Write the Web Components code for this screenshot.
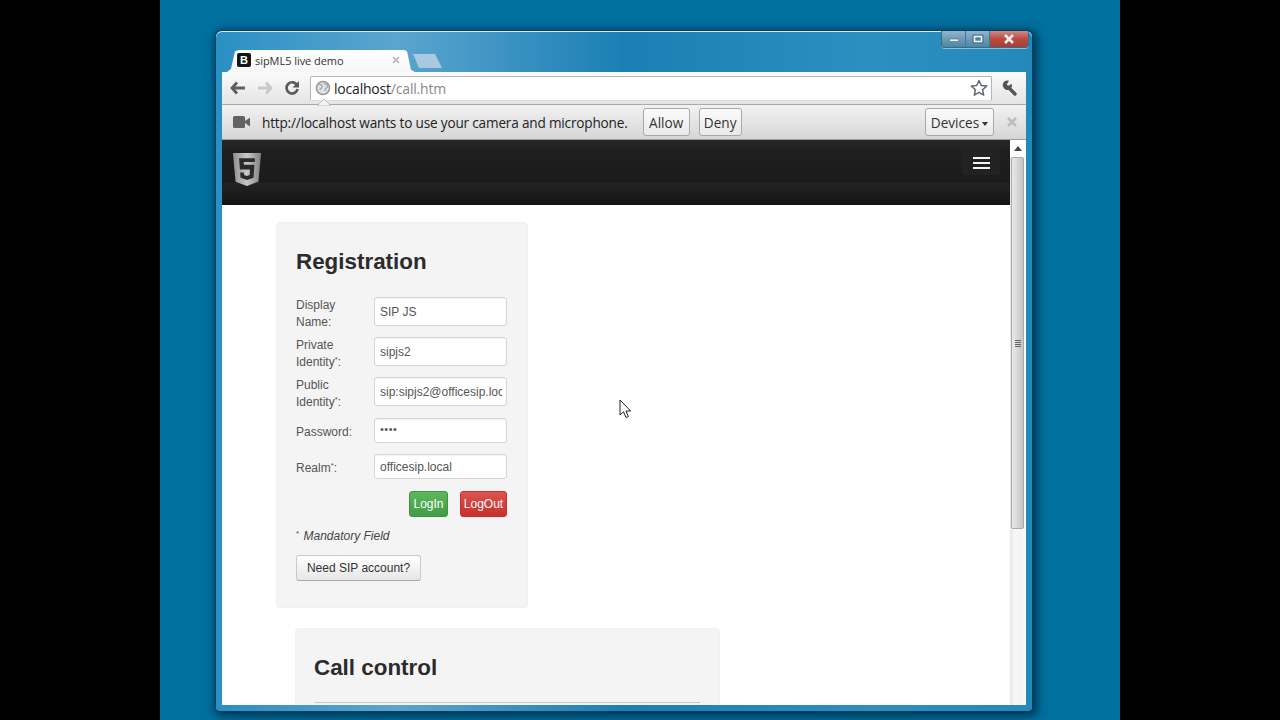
<!DOCTYPE html>
<html>
<head>
<meta charset="utf-8">
<title>sipML5 live demo</title>
<style>
    html, body { margin: 0; height: 100%; background: #000; overflow: hidden; }
</style>
</head>
<body>
<desktop-screen>
    <browser-window>
        <tab-strip slot="tabs"></tab-strip>
        <browser-toolbar slot="toolbar"></browser-toolbar>
        <permission-bar slot="infobar"></permission-bar>
        <demo-page></demo-page>
    </browser-window>
    <mouse-cursor></mouse-cursor>
</desktop-screen>

<script>
function define(name, html) {
    customElements.define(name, class extends HTMLElement {
        constructor() {
            super();
            this.attachShadow({mode: 'open'}).innerHTML = html;
        }
    });
}

define('desktop-screen', `
    <style>
        :host {
            display: block;
            position: relative;
            box-sizing: border-box;
            width: 960px;
            height: 720px;
            margin: 0 auto;
            padding: 31px 0 0 56px;
            overflow: hidden;
            background: #00709f;
        }
    </style>
    <slot></slot>
`);

define('browser-window', `
    <style>
        :host {
            display: flex;
            flex-direction: column;
            position: relative;
            box-sizing: border-box;
            width: 816px;
            height: 680px;
            padding: 0 6px 6px 6px;
            border-radius: 6px 6px 4px 4px;
            background: linear-gradient(90deg, #2a8fc4 0, #5ba5cf 22%, #1b7fb5 50%, #2d8fc0 80%, #2389bb 100%);
            box-shadow: 0 0 0 1px #0b3f5e, 2px 2px 10px 3px rgba(0,25,45,.7), inset 0 1px 0 #d6ecf6;
        }
        .tabs { height: 41px; flex: none; }
        .inner { flex: 1; display: flex; flex-direction: column; min-height: 0; background: #fff; }
        .controls {
            position: absolute;
            top: 0;
            right: 3px;
            display: flex;
            height: 16px;
            border: 1px solid #3b6a88;
            border-top: 0;
            border-radius: 0 0 4px 4px;
            overflow: hidden;
            box-shadow: 0 1px 0 rgba(255,255,255,.45);
        }
        .controls div { display: flex; align-items: center; justify-content: center; }
        .min, .max {
            width: 23px;
            background: linear-gradient(#8fb6cd, #6f9bb6 50%, #4b86a8);
            border-right: 1px solid #4a7590;
        }
        .close { width: 38px; background: linear-gradient(#cf8b82, #b94b41 50%, #a83e35); }
    </style>
    <div class="tabs"><slot name="tabs"></slot></div>
    <div class="inner">
        <slot name="toolbar"></slot>
        <slot name="infobar"></slot>
        <slot></slot>
    </div>
    <div class="controls">
        <div class="min"><svg width="12" height="6"><rect x="1.5" y="3" width="9" height="2.5" fill="#e8f0f5" stroke="#456" stroke-width=".5"/></svg></div>
        <div class="max"><svg width="12" height="10"><rect x="1" y="1" width="10" height="8" fill="#56809a" stroke="#34566c" stroke-width=".6"/><rect x="2.5" y="2.5" width="7" height="5" fill="none" stroke="#eef4f8" stroke-width="1.6"/></svg></div>
        <div class="close"><svg width="12" height="10"><path d="M2 1l8 8M10 1l-8 8" stroke="#f6ece9" stroke-width="2.6"/></svg></div>
    </div>
`);

define('tab-strip', `
    <style>
        :host {
            display: flex;
            align-items: flex-end;
            height: 41px;
            padding-left: 5px;
            font: 11px "Open Sans", "Liberation Sans", sans-serif;
            letter-spacing: -.05px;
        }
        .tab {
            display: flex;
            align-items: center;
            box-sizing: border-box;
            width: 188px;
            height: 22px;
            padding: 0 14px 2px 10px;
            color: #333;
            background: linear-gradient(#fff, #f6f6f6);
            clip-path: polygon(0 100%, 4px 85%, 8px 6%, 12px 0, 177px 0, 180px 6%, 184px 90%, 188px 100%);
        }
        .fav {
            width: 14px;
            height: 14px;
            margin-right: 4px;
            border-radius: 2px;
            background: #151515;
            color: #fff;
            font: bold 11px/14px "Liberation Sans", sans-serif;
            text-align: center;
        }
        .title { flex: 1; white-space: nowrap; }
        .x { width: 10px; height: 10px; }
        .new {
            width: 29px;
            height: 14px;
            margin: 0 0 4px -2px;
            background: #a9c9e0;
            clip-path: polygon(0 0, 22px 0, 29px 100%, 6px 100%);
        }
    </style>
    <div class="tab">
        <div class="fav">B</div>
        <div class="title">sipML5 live demo</div>
        <svg class="x" viewBox="0 0 10 10"><path d="M2 2l6 6M8 2l-6 6" stroke="#b4b4b4" stroke-width="1.6"/></svg>
    </div>
    <div class="new"></div>
`);

define('browser-toolbar', `
    <style>
        :host {
            display: flex;
            align-items: center;
            box-sizing: border-box;
            height: 33px;
            padding: 0 9px 0 8px;
            background: linear-gradient(#fbfbfb, #e4e4e4);
            border-bottom: 1px solid #a9a9a9;
        }
        svg { flex: none; display: block; }
        .nav { display: flex; gap: 11px; align-items: center; margin-right: 10px; }
        .omni {
            flex: 1;
            display: flex;
            align-items: center;
            box-sizing: border-box;
            height: 25px;
            padding: 0 3px 0 4px;
            background: #fff;
            border: 1px solid #b4b4b4;
            border-bottom-color: #ddd;
            border-radius: 2px;
            font: 14px "Open Sans", "Liberation Sans", sans-serif;
            letter-spacing: -.2px;
            color: #222;
        }
        .omni span { color: #888; }
        .url { flex: 1; margin-left: 3px; white-space: nowrap; }
        .wrench { margin-left: 9px; }
    </style>
    <div class="nav">
        <svg width="16" height="14" viewBox="0 0 16 14"><path d="M7 1.5L2 7l5 5.5M2.5 7H15" fill="none" stroke="#5e5e5e" stroke-width="2.8"/></svg>
        <svg width="16" height="14" viewBox="0 0 16 14"><path d="M9 1.5L14 7l-5 5.5M13.5 7H1" fill="none" stroke="#c9c9c9" stroke-width="2.8"/></svg>
        <svg width="16" height="16" viewBox="0 0 16 16"><path d="M13 5.2A5.6 5.6 0 1 0 13.6 9" fill="none" stroke="#5a5a5a" stroke-width="2.6"/><path d="M15 1v6.5H8.5z" fill="#5a5a5a"/></svg>
    </div>
    <div class="omni">
        <svg width="16" height="16" viewBox="0 0 16 16"><circle cx="8" cy="8" r="6.5" fill="#dfe3e5" stroke="#9a9a9a" stroke-width="1.6"/><path d="M4 5c2-1 3 0 3 2s-2 1-2 3M9 3c1 2 3 1 4 3-1 2-3 2-3 5" fill="none" stroke="#a5a5a5" stroke-width="1.3"/></svg>
        <div class="url">localhost<span>/call.htm</span></div>
        <svg width="18" height="18" viewBox="0 0 18 18"><path d="M9 1.5l2.3 5 5.3.6-4 3.6 1.1 5.4L9 13.3l-4.7 2.8 1.1-5.4-4-3.6 5.3-.6z" fill="#fff" stroke="#5f6a70" stroke-width="1.5" stroke-linejoin="round"/></svg>
    </div>
    <svg class="wrench" width="16" height="16" viewBox="0 0 16 16"><path d="M14 14L7.5 7.5" stroke="#555" stroke-width="3.4" stroke-linecap="round"/><path d="M8 .8A4.6 4.6 0 0 0 2 6.6 4.6 4.6 0 0 0 9.2 9 4.6 4.6 0 0 0 10.6 3.8L8 5.8 5.6 4.8z" fill="#555"/></svg>
`);

define('permission-bar', `
    <style>
        :host {
            display: flex;
            align-items: center;
            position: relative;
            box-sizing: border-box;
            height: 35px;
            padding: 0 8px 0 11px;
            background: linear-gradient(#f2f2f2, #d6d6d6);
            border-bottom: 1px solid #9b9b9b;
            font: 13.6px "Open Sans", "Liberation Sans", sans-serif;
            letter-spacing: -.18px;
            color: #222;
        }
        svg { flex: none; display: block; }
        .notch { position: absolute; left: 95px; top: -6px; }
        .msg { margin: 0 15px 0 11px; white-space: nowrap; }
        button {
            box-sizing: border-box;
            height: 28px;
            padding: 0;
            margin: 0 9px 0 0;
            font: inherit;
            color: #333;
            background: linear-gradient(#fbfbfb, #e9e9e9);
            border: 1px solid #a8a8a8;
            border-radius: 3px;
        }
        .allow { width: 47px; }
        .deny { width: 43px; margin-right: 0; }
        .space { flex: 1; }
        .devices { width: 69px; margin-right: 12px; white-space: nowrap; }
        .caret {
            display: inline-block;
            margin-left: 3px;
            vertical-align: middle;
            border: 3px solid transparent;
            border-top: 4px solid #333;
            border-bottom: 0;
        }
    </style>
    <svg class="notch" width="14" height="7" viewBox="0 0 14 7"><path d="M0 7L7 0l7 7z" fill="#f2f2f2" stroke="#b5b5b5" stroke-width=".8"/></svg>
    <svg width="18" height="12" viewBox="0 0 18 12"><rect width="12" height="12" rx="1.5" fill="#636363"/><path d="M12 5l5-3.5v9L12 7z" fill="#636363"/></svg>
    <div class="msg">http://localhost wants to use your camera and microphone.</div>
    <button class="allow">Allow</button>
    <button class="deny">Deny</button>
    <div class="space"></div>
    <button class="devices">Devices<span class="caret"></span></button>
    <svg width="12" height="12" viewBox="0 0 12 12"><path d="M2 2l8 8M10 2l-8 8" stroke="#bdbdbd" stroke-width="2.6"/></svg>
`);

define('demo-page', `
    <style>
        :host {
            flex: 1;
            display: flex;
            min-height: 0;
            font: 12px "Liberation Sans", Arial, sans-serif;
            color: #555;
        }
        .view { flex: 1; min-width: 0; overflow: hidden; background: #fff; }
        .content { padding: 17px 0 0 54px; }
        .call { margin: 20px 0 0 19px; }
    </style>
    <div class="view">
        <nav-bar></nav-bar>
        <div class="content">
            <registration-card></registration-card>
            <call-card class="call"></call-card>
        </div>
    </div>
    <page-scrollbar></page-scrollbar>
`);

define('nav-bar', `
    <style>
        :host {
            display: flex;
            justify-content: space-between;
            align-items: flex-start;
            box-sizing: border-box;
            height: 65px;
            padding: 12px 10px 0 10px;
            background: linear-gradient(#282828 0, #1e1e1e 20%, #1b1b1b 65%, #232323 66%, #141414 100%);
        }
        .toggle {
            display: flex;
            flex-direction: column;
            justify-content: center;
            gap: 3px;
            box-sizing: border-box;
            width: 38px;
            height: 25px;
            margin-top: -2px;
            padding: 0 10px 0 11px;
            background: #222;
            border-radius: 3px;
        }
        .toggle i { display: block; height: 2px; background: #f5f5f5; }
    </style>
    <svg width="30" height="35" viewBox="0 0 32 36" preserveAspectRatio="none">
        <defs><linearGradient id="sh" x1="0" x2="1" y1="0" y2="0"><stop offset="0" stop-color="#8e8e8e"/><stop offset=".5" stop-color="#c8c8c8"/><stop offset="1" stop-color="#808080"/></linearGradient></defs>
        <path d="M1 1h30l-2.8 29.5L16 35 3.8 30.5z" fill="url(#sh)"/>
        <path d="M24.5 6.5H7.5l.9 11.5h10.8l-.4 5.7-3 1-3-1-.2-2.7H8.7l.4 5.6 7 2.2 6.9-2.2.9-13.4H12.7l-.3-3h11.8z" fill="#2a2a2a"/>
    </svg>
    <div class="toggle"><i></i><i></i><i></i></div>
`);

define('well-box', `
    <style>
        :host {
            display: block;
            box-sizing: border-box;
            background: #f4f4f4;
            border: 1px solid #f0f0f0;
            border-radius: 4px;
        }
    </style>
    <slot></slot>
`);

define('form-row', `
    <style>
        :host {
            display: grid;
            grid-template-columns: 78px 133px;
            grid-template-rows: var(--h, 29px);
            align-items: center;
            line-height: 17px;
            font-size: 12px;
            color: #555;
        }
        .label { margin-top: 4px; }
        .box {
            box-sizing: border-box;
            height: var(--h, 29px);
            padding: 0 4px 0 5px;
            background: #fff;
            border: 1px solid #d6d6d6;
            border-radius: 3px;
            box-shadow: inset 0 1px 1px rgba(0,0,0,.05);
            line-height: calc(var(--h, 29px) - 1px);
        }
        .clip { height: 100%; white-space: nowrap; overflow: hidden; }
    </style>
    <div class="label"><slot name="label"></slot></div>
    <div class="box"><div class="clip"><slot></slot></div></div>
`);

define('registration-card', `
    <style>
        :host { display: block; width: 252px; }
        well-box { height: 386px; padding: 0 19px; }
        h3 {
            margin: 0;
            padding-top: 24px;
            height: 50px;
            font: bold 22.4px/30px "Liberation Sans", Arial, sans-serif;
            color: #2b2b2b;
        }
        .form { display: flex; flex-direction: column; }
        form-row { margin-bottom: 12px; }
        .r1, .r2 { margin-bottom: 11px; }
        .r4 { margin-bottom: 11px; }
        .pw { --h: 25px; }
        sup { font-size: 8px; line-height: 0; vertical-align: 4px; }
        .dots { font-size: 11px; letter-spacing: .5px; line-height: 20px; display: inline-block; vertical-align: top; }
        .actions { display: flex; justify-content: flex-end; gap: 12px; width: 211px; }
        .btn {
            box-sizing: border-box;
            height: 26px;
            font: 12px/24px "Liberation Sans", Arial, sans-serif;
            color: #fff;
            border-radius: 3px;
            text-align: center;
        }
        .login { width: 39px; background: linear-gradient(#5cb85c, #429c46); border: 1px solid #3f9443; }
        .logout { width: 47px; background: linear-gradient(#d9534f, #c9302c); border: 1px solid #c7302c; }
        .note { height: 14px; margin-top: 12px; line-height: 14px; color: #444; }
        .note sup { margin-right: 1px; }
        .need {
            box-sizing: border-box;
            width: 125px;
            height: 26px;
            margin-top: 12px;
            line-height: 24px;
            text-align: center;
            color: #333;
            background: linear-gradient(#fff, #e6e6e6);
            border: 1px solid #c9c9c9;
            border-bottom-color: #aaa;
            border-radius: 3px;
        }
    </style>
    <well-box>
        <h3>Registration</h3>
        <div class="form">
            <form-row class="r1"><span slot="label">Display<br>Name:</span>SIP JS</form-row>
            <form-row class="r2"><span slot="label">Private<br>Identity<sup>*</sup>:</span>sipjs2</form-row>
            <form-row class="r3"><span slot="label">Public<br>Identity<sup>*</sup>:</span>sip:sipjs2@officesip.local</form-row>
            <form-row class="pw r4"><span slot="label">Password:</span><span class="dots">••••</span></form-row>
            <form-row class="pw"><span slot="label">Realm<sup>*</sup>:</span>officesip.local</form-row>
        </div>
        <div class="actions">
            <div class="btn login">LogIn</div>
            <div class="btn logout">LogOut</div>
        </div>
        <div class="note"><sup>*</sup> <em>Mandatory Field</em></div>
        <div class="need">Need SIP account?</div>
    </well-box>
`);

define('call-card', `
    <style>
        :host { display: block; width: 425px; }
        well-box { height: 120px; padding: 0 18px; }
        h3 {
            margin: 0;
            padding-top: 24px;
            height: 49px;
            font: bold 22.4px/30px "Liberation Sans", Arial, sans-serif;
            color: #2b2b2b;
        }
        .line { height: 1px; width: 386px; background: #c9c9c9; }
    </style>
    <well-box>
        <h3>Call control</h3>
        <div class="line"></div>
    </well-box>
`);

define('page-scrollbar', `
    <style>
        :host {
            display: flex;
            flex-direction: column;
            flex: none;
            box-sizing: border-box;
            width: 16px;
            background: linear-gradient(90deg, #e7e7e7, #f7f7f7 30%, #f4f4f4 70%, #fbfbfb);
        }
        .up { display: flex; flex: none; height: 17px; align-items: center; justify-content: center; background: #fff; }
        .thumb {
            flex: none;
            display: flex;
            align-items: center;
            justify-content: center;
            box-sizing: border-box;
            height: 372px;
            margin: 0 2px 0 1px;
            background: linear-gradient(90deg, #e8e8e8, #dcdcdc 40%, #c3c3c3);
            border: 1px solid #ababab;
            border-radius: 2px;
        }
        .grip { display: flex; flex-direction: column; gap: 1px; }
        .grip i { display: block; width: 6px; height: 1px; background: #666; }
    </style>
    <div class="up"><svg width="8" height="5"><path d="M0 5l4-5 4 5z" fill="#444"/></svg></div>
    <div class="thumb"><div class="grip"><i></i><i></i><i></i><i></i></div></div>
`);

define('mouse-cursor', `
    <style>
        :host { position: absolute; left: 459px; top: 399px; width: 14px; height: 20px; }
        svg { display: block; }
    </style>
    <svg width="14" height="20" viewBox="0 0 14 20"><path d="M1 1v15l3.5-3.2L7 18.5l2.4-1-2.5-5.5h4.8z" fill="#fff" stroke="#222" stroke-width="1"/></svg>
`);
</script>
</body>
</html>
